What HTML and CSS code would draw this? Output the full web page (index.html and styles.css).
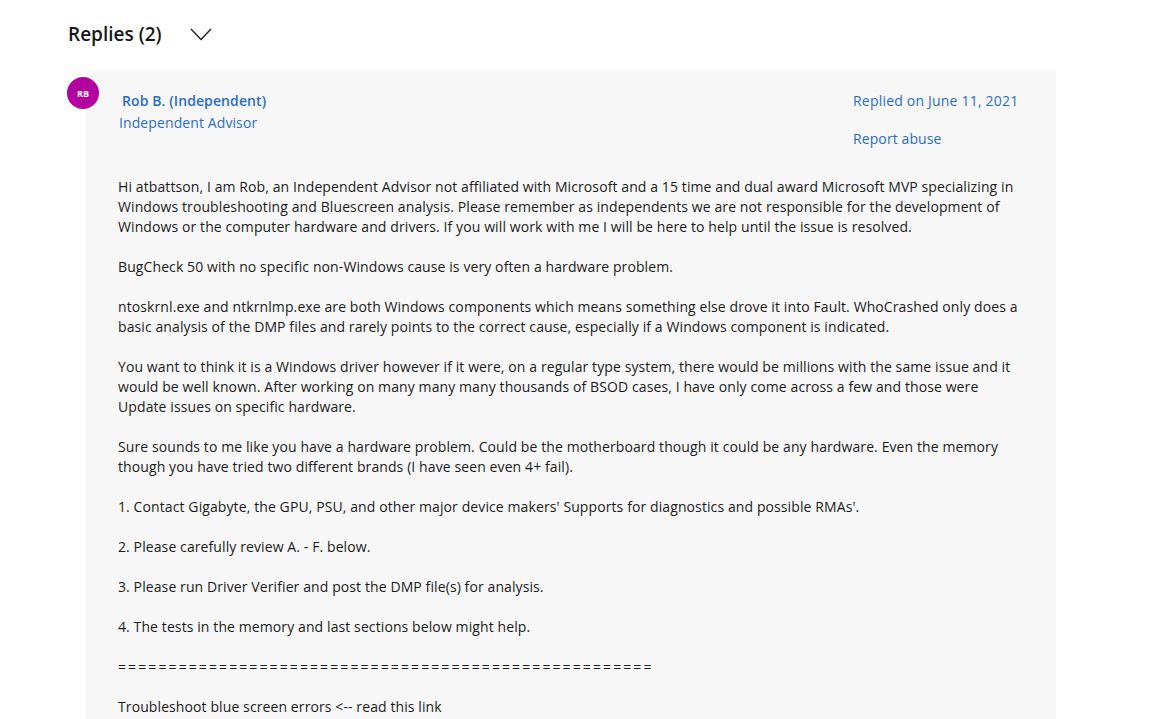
FILE: index.html
```html
<!DOCTYPE html>
<html lang="en">
<head>
<meta charset="utf-8">
<title>Replies</title>
<link rel="stylesheet" href="styles.css">
</head>
<body>
<div class="page">
  <div class="replies-head">
    <h2 class="replies-title">Replies (2)</h2>
    <svg class="chevron" width="22" height="13" viewBox="0 0 22 13"><path d="M1 1 L11 11.5 L21 1" fill="none" stroke="#222" stroke-width="1.4"/></svg>
  </div>
  <div class="reply">
    <div class="avatar">RB</div>
    <div class="reply-head">
      <div class="author">
        <a class="author-name">Rob B. (Independent)</a>
        <span class="author-role">Independent Advisor</span>
      </div>
      <div class="meta">
        <span class="meta-date">Replied on June 11, 2021</span>
        <a class="meta-report">Report abuse</a>
      </div>
    </div>
    <div class="reply-body">
      <p>Hi atbattson, I am Rob, an Independent Advisor not affiliated with Microsoft and a 15 time and dual award Microsoft MVP specializing in<br>Windows troubleshooting and Bluescreen analysis. Please remember as independents we are not responsible for the development of<br>Windows or the computer hardware and drivers. If you will work with me I will be here to help until the issue is resolved.</p>
      <p>BugCheck 50 with no specific non-Windows cause is very often a hardware problem.</p>
      <p>ntoskrnl.exe and ntkrnlmp.exe are both Windows components which means something else drove it into Fault. WhoCrashed only does a<br>basic analysis of the DMP files and rarely points to the correct cause, especially if a Windows component is indicated.</p>
      <p>You want to think it is a Windows driver however if it were, on a regular type system, there would be millions with the same issue and it<br>would be well known. After working on many many many thousands of BSOD cases, I have only come across a few and those were<br>Update issues on specific hardware.</p>
      <p>Sure sounds to me like you have a hardware problem. Could be the motherboard though it could be any hardware. Even the memory<br>though you have tried two different brands (I have seen even 4+ fail).</p>
      <p>1. Contact Gigabyte, the GPU, PSU, and other major device makers' Supports for diagnostics and possible RMAs'.</p>
      <p>2. Please carefully review A. - F. below.</p>
      <p>3. Please run Driver Verifier and post the DMP file(s) for analysis.</p>
      <p>4. The tests in the memory and last sections below might help.</p>
      <p class="rule">=====================================================</p>
      <p>Troubleshoot blue screen errors &lt;-- read this link</p>
    </div>
  </div>
</div>
</body>
</html>
```
FILE: styles.css
```css
html, body {
  margin: 0;
  padding: 0;
  background: #ffffff;
}
body {
  font-family: "Open Sans", "Noto Sans", sans-serif;
  color: #1b1b1b;
  overflow: hidden;
  height: 719px;
}
.page {
  padding: 20px 0 0 68px;
}
.replies-head {
  display: flex;
  align-items: center;
  gap: 28px;
  height: 28px;
  margin-bottom: 22px;
}
.replies-title {
  margin: 0;
  font-size: 19px;
  font-weight: 600;
  line-height: 28px;
  color: #171717;
}
.chevron {
  display: block;
}
.reply {
  position: relative;
  margin-left: 18px;
  width: 970px;
  background: #f7f7f7;
  padding: 21px 38px 0 32px;
  box-sizing: border-box;
  min-height: 700px;
}
.avatar {
  position: absolute;
  left: -19px;
  top: 7px;
  width: 32px;
  height: 32px;
  border-radius: 50%;
  background: #b4009e;
  color: #fff;
  font-size: 9px;
  font-weight: 700;
  display: flex;
  align-items: center;
  justify-content: center;
}
.reply-head {
  display: grid;
  grid-template-columns: 1fr 165px;
  font-size: 14px;
  line-height: 20px;
  color: #2b6cc4;
  letter-spacing: 0.1px;
}
.author {
  display: flex;
  flex-direction: column;
  gap: 2px;
}
.author-name {
  font-weight: 600;
  padding-left: 4px;
}
.author-role {
  padding-left: 1px;
}
.meta {
  display: flex;
  flex-direction: column;
  gap: 18px;
  white-space: nowrap;
}
.meta-date {
  letter-spacing: 0.2px;
}
.reply-body {
  margin-top: 28px;
  font-size: 14px;
  line-height: 20px;
  white-space: nowrap;
  letter-spacing: 0.1px;
}
.reply-body p {
  margin: 0 0 20px 0;
}
.reply-body .rule {
  letter-spacing: 2.1px;
}
```
